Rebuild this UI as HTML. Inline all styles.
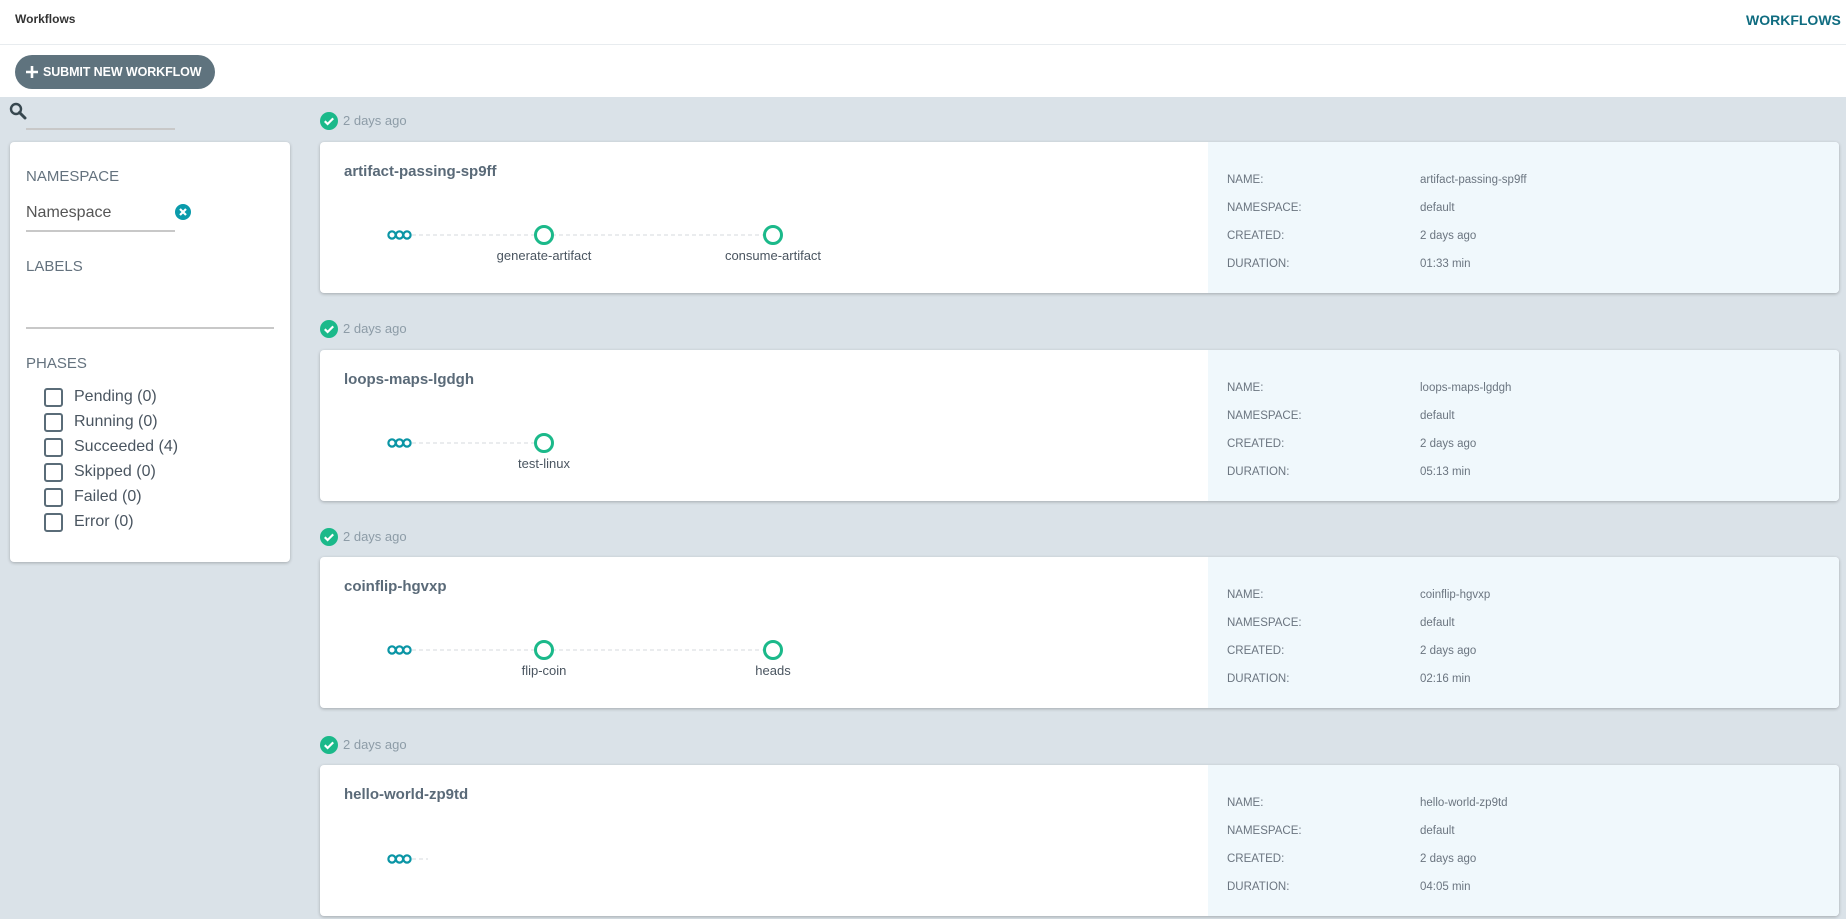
<!DOCTYPE html>
<html><head><meta charset="utf-8"><style>
*{box-sizing:border-box;margin:0;padding:0}
body{width:1846px;height:919px;overflow:hidden;background:#dae2e8;font-family:"Liberation Sans",sans-serif;position:relative}
.a{position:absolute}
.hdr{left:0;top:0;width:1846px;height:45px;background:#fff;border-bottom:1px solid #e8ecef}
.tb{left:0;top:45px;width:1846px;height:52px;background:#fff}
.btn{left:15px;top:55px;width:200px;height:34px;border-radius:17px;background:#5f737e;color:#fff;font-size:12.5px;font-weight:bold;line-height:34px;padding-left:28px;letter-spacing:-0.1px;white-space:nowrap}
.fc{left:10px;top:142px;width:280px;height:420px;background:#fff;border-radius:4px;box-shadow:0 1px 3px rgba(0,0,0,.25)}
.lbl{font-size:15px;color:#64727e;left:26px}
.line{height:2px;background:#c8c8c8}
.cb{left:44px;width:19px;height:19px;border:2px solid #5a6c78;border-radius:3px}
.ct{left:74px;font-size:16px;color:#4a5560;line-height:20px}
.card{left:320px;width:1519px;height:151px;background:#fff;border-radius:4px;box-shadow:0 1px 3px rgba(0,0,0,.25);overflow:hidden}
.info{position:absolute;left:888px;top:0;right:0;bottom:0;background:#f0f8fc}
.info div{position:absolute;font-size:11.5px;color:#6b7580;line-height:14px}
.ttl{position:absolute;left:24px;top:21px;font-size:15px;font-weight:bold;color:#5a6a78}
.ago{left:343px;font-size:13px;color:#8d9ca7;line-height:16px}
.chk{left:320px;width:18px;height:18px}
.nl{position:absolute;font-size:13px;color:#4a5560;transform:translateX(-50%);white-space:nowrap;top:106px}
</style></head><body>
<div class="a hdr"></div>
<div class="a" style="left:15px;top:12px;font-size:12px;font-weight:bold;color:#333">Workflows</div>
<div class="a" style="left:1746px;top:12px;font-size:14px;font-weight:bold;color:#0f6c80">WORKFLOWS</div>
<div class="a tb"></div>
<div class="a btn"><svg class="a" style="left:10px;top:10px" width="14" height="14" viewBox="0 0 14 14"><path d="M7 1v12M1 7h12" stroke="#fff" stroke-width="2.6"/></svg>SUBMIT NEW WORKFLOW</div>

<svg class="a" style="left:9px;top:102px" width="18" height="18" viewBox="0 0 18 18"><circle cx="7" cy="7" r="5" fill="none" stroke="#37474f" stroke-width="2.4"/><path d="M10.5 10.5L16 16" stroke="#37474f" stroke-width="3" stroke-linecap="round"/></svg>
<div class="a line" style="left:26px;top:128px;width:149px"></div>

<div class="a fc"></div>
<div class="a lbl" style="top:168px">NAMESPACE</div>
<div class="a" style="left:26px;top:204px;font-size:16px;color:#555">Namespace</div>
<div class="a line" style="left:26px;top:230px;width:149px"></div>
<svg class="a" style="left:175px;top:204px" width="16" height="16" viewBox="0 0 16 16"><circle cx="8" cy="8" r="8" fill="#0a9bab"/><path d="M5 5l6 6M11 5l-6 6" stroke="#fff" stroke-width="2.2"/></svg>
<div class="a lbl" style="top:258px">LABELS</div>
<div class="a line" style="left:26px;top:327px;width:248px"></div>
<div class="a lbl" style="top:355px">PHASES</div>
<div class="a cb" style="top:388px"></div><div class="a ct" style="top:387px">Pending (0)</div>
<div class="a cb" style="top:413px"></div><div class="a ct" style="top:412px">Running (0)</div>
<div class="a cb" style="top:438px"></div><div class="a ct" style="top:437px">Succeeded (4)</div>
<div class="a cb" style="top:463px"></div><div class="a ct" style="top:462px">Skipped (0)</div>
<div class="a cb" style="top:488px"></div><div class="a ct" style="top:487px">Failed (0)</div>
<div class="a cb" style="top:513px"></div><div class="a ct" style="top:512px">Error (0)</div>

<svg width="0" height="0" style="position:absolute"><defs>
<symbol id="ok" viewBox="0 0 18 18"><circle cx="9" cy="9" r="9" fill="#1bb98a"/><path d="M4.8 9.2l2.8 2.8 5.6-5.6" fill="none" stroke="#fff" stroke-width="2.2"/></symbol>
<symbol id="dots" viewBox="0 0 26 10"><g fill="none" stroke="#0a95a5" stroke-width="2.2"><circle cx="5" cy="5" r="3.6"/><circle cx="12.5" cy="5" r="3.6"/><circle cx="20" cy="5" r="3.6"/></g></symbol>
</defs></svg>

<svg class="a chk" style="top:112px"><use href="#ok"/></svg><div class="a ago" style="top:113px">2 days ago</div>
<div class="a card" style="top:142px"><div class="ttl">artifact-passing-sp9ff</div>
<svg style="position:absolute;left:0;top:0" width="600" height="151"><line x1="92" y1="93" x2="454" y2="93" stroke="#d5d9dc" stroke-dasharray="4 3"/><use href="#dots" x="67" y="88" width="26" height="10"/><circle cx="224" cy="93" r="8.5" fill="#fff" stroke="#1bb98a" stroke-width="3"/><circle cx="453" cy="93" r="8.5" fill="#fff" stroke="#1bb98a" stroke-width="3"/></svg>
<div class="nl" style="left:224px">generate-artifact</div><div class="nl" style="left:453px">consume-artifact</div>
<div class="info"><div style="left:19px;top:31px">NAME:</div><div style="left:212px;top:31px">artifact-passing-sp9ff</div><div style="left:19px;top:59px">NAMESPACE:</div><div style="left:212px;top:59px">default</div><div style="left:19px;top:87px">CREATED:</div><div style="left:212px;top:87px">2 days ago</div><div style="left:19px;top:115px">DURATION:</div><div style="left:212px;top:115px">01:33 min</div></div></div>

<svg class="a chk" style="top:320px"><use href="#ok"/></svg><div class="a ago" style="top:321px">2 days ago</div>
<div class="a card" style="top:350px"><div class="ttl">loops-maps-lgdgh</div>
<svg style="position:absolute;left:0;top:0" width="600" height="151"><line x1="92" y1="93" x2="224" y2="93" stroke="#d5d9dc" stroke-dasharray="4 3"/><use href="#dots" x="67" y="88" width="26" height="10"/><circle cx="224" cy="93" r="8.5" fill="#fff" stroke="#1bb98a" stroke-width="3"/></svg>
<div class="nl" style="left:224px">test-linux</div>
<div class="info"><div style="left:19px;top:31px">NAME:</div><div style="left:212px;top:31px">loops-maps-lgdgh</div><div style="left:19px;top:59px">NAMESPACE:</div><div style="left:212px;top:59px">default</div><div style="left:19px;top:87px">CREATED:</div><div style="left:212px;top:87px">2 days ago</div><div style="left:19px;top:115px">DURATION:</div><div style="left:212px;top:115px">05:13 min</div></div></div>

<svg class="a chk" style="top:528px"><use href="#ok"/></svg><div class="a ago" style="top:529px">2 days ago</div>
<div class="a card" style="top:557px"><div class="ttl">coinflip-hgvxp</div>
<svg style="position:absolute;left:0;top:0" width="600" height="151"><line x1="92" y1="93" x2="454" y2="93" stroke="#d5d9dc" stroke-dasharray="4 3"/><use href="#dots" x="67" y="88" width="26" height="10"/><circle cx="224" cy="93" r="8.5" fill="#fff" stroke="#1bb98a" stroke-width="3"/><circle cx="453" cy="93" r="8.5" fill="#fff" stroke="#1bb98a" stroke-width="3"/></svg>
<div class="nl" style="left:224px">flip-coin</div><div class="nl" style="left:453px">heads</div>
<div class="info"><div style="left:19px;top:31px">NAME:</div><div style="left:212px;top:31px">coinflip-hgvxp</div><div style="left:19px;top:59px">NAMESPACE:</div><div style="left:212px;top:59px">default</div><div style="left:19px;top:87px">CREATED:</div><div style="left:212px;top:87px">2 days ago</div><div style="left:19px;top:115px">DURATION:</div><div style="left:212px;top:115px">02:16 min</div></div></div>

<svg class="a chk" style="top:736px"><use href="#ok"/></svg><div class="a ago" style="top:737px">2 days ago</div>
<div class="a card" style="top:765px"><div class="ttl">hello-world-zp9td</div>
<svg style="position:absolute;left:0;top:0" width="600" height="151"><line x1="92" y1="94" x2="108" y2="94" stroke="#d5d9dc" stroke-dasharray="4 3"/><use href="#dots" x="67" y="89" width="26" height="10"/></svg>
<div class="info"><div style="left:19px;top:31px">NAME:</div><div style="left:212px;top:31px">hello-world-zp9td</div><div style="left:19px;top:59px">NAMESPACE:</div><div style="left:212px;top:59px">default</div><div style="left:19px;top:87px">CREATED:</div><div style="left:212px;top:87px">2 days ago</div><div style="left:19px;top:115px">DURATION:</div><div style="left:212px;top:115px">04:05 min</div></div></div>
</body></html>
